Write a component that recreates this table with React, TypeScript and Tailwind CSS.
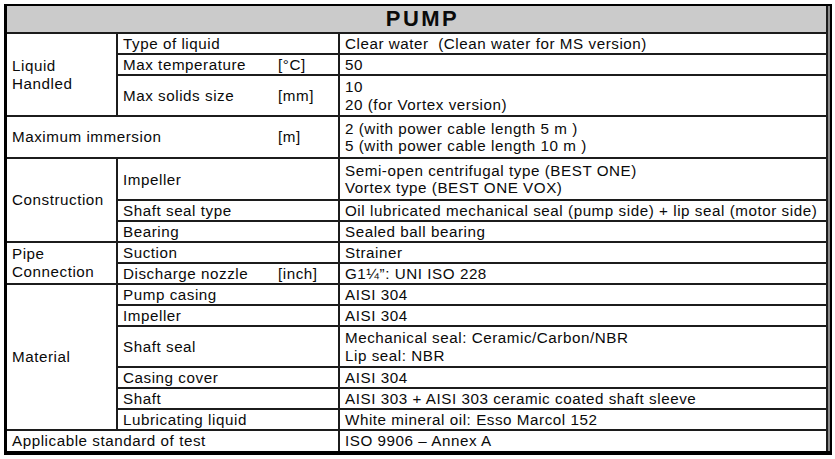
import React from "react";

const font = { fontFamily: '"Liberation Sans", Arial, sans-serif' };

function A({ r, span = 1, cols = 1, children }: { r: number; span?: number; cols?: number; children: React.ReactNode }) {
  return (
    <div
      className={`bg-white flex items-center pl-[5px] leading-[18px] col-start-1`}
      style={{ gridRow: `${r} / span ${span}`, gridColumn: `1 / span ${cols}` }}
    >
      <div>{children}</div>
    </div>
  );
}

function B({ r, label, unit }: { r: number; label: string; unit?: string }) {
  return (
    <div className="bg-white flex items-center pl-[5px] leading-[17px]" style={{ gridRow: `${r}`, gridColumn: "2" }}>
      <span className="w-[155px] shrink-0 whitespace-nowrap">{label}</span>
      {unit && <span className="whitespace-nowrap">{unit}</span>}
    </div>
  );
}

function C({ r, lines }: { r: number; lines: string[] }) {
  return (
    <div className="bg-white flex flex-col justify-center pl-[5px] leading-[17.5px]" style={{ gridRow: `${r}`, gridColumn: "3" }}>
      {lines.map((l, i) => (
        <div key={i} className="whitespace-pre">
          {l}
        </div>
      ))}
    </div>
  );
}

export default function App() {
  return (
    <div className="w-[835px] h-[459px] bg-white pt-[4px] pl-[4px]" style={font}>
      <div className="w-[828px] border-t-2 border-l-[3px] border-b-[4px] border-r-2 border-black bg-[#8a8a8a] pr-[2px]">
        <div className="grid grid-cols-[109px_220px_486px] grid-rows-[26px_19px_19px_39px_40px_40px_19px_19px_19px_19px_19px_19px_39px_19px_19px_19px_20px] gap-[2px] bg-[#1c1c1c] border-r-2 border-[#1c1c1c] text-[15.2px] tracking-[0.55px] text-[#0a0a0a]">
          <div className="bg-[#cbcbcb] flex items-center justify-center pl-[12px] font-bold text-[22px] tracking-[2.5px] leading-none" style={{ gridRow: "1", gridColumn: "1 / span 3" }}>
            PUMP
          </div>

          <A r={2} span={3}>
            Liquid
            <br />
            Handled
          </A>
          <B r={2} label="Type of liquid" />
          <C r={2} lines={["Clear water  (Clean water for MS version)"]} />
          <B r={3} label="Max temperature" unit="[°C]" />
          <C r={3} lines={["50"]} />
          <B r={4} label="Max solids size" unit="[mm]" />
          <C r={4} lines={["10", "20 (for Vortex version)"]} />

          <div className="bg-white flex items-center pl-[5px]" style={{ gridRow: "5", gridColumn: "1 / span 2" }}>
            <span className="w-[266px] shrink-0 whitespace-nowrap">Maximum immersion</span>
            <span>[m]</span>
          </div>
          <C r={5} lines={["2 (with power cable length 5 m )", "5 (with power cable length 10 m )"]} />

          <A r={6} span={3}>Construction</A>
          <B r={6} label="Impeller" />
          <C r={6} lines={["Semi-open centrifugal type (BEST ONE)", "Vortex type (BEST ONE VOX)"]} />
          <B r={7} label="Shaft seal type" />
          <C r={7} lines={["Oil lubricated mechanical seal (pump side) + lip seal (motor side)"]} />
          <B r={8} label="Bearing" />
          <C r={8} lines={["Sealed ball bearing"]} />

          <A r={9} span={2}>
            Pipe
            <br />
            Connection
          </A>
          <B r={9} label="Suction" />
          <C r={9} lines={["Strainer"]} />
          <B r={10} label="Discharge nozzle" unit="[inch]" />
          <C r={10} lines={["G1¼”: UNI ISO 228"]} />

          <A r={11} span={6}>Material</A>
          <B r={11} label="Pump casing" />
          <C r={11} lines={["AISI 304"]} />
          <B r={12} label="Impeller" />
          <C r={12} lines={["AISI 304"]} />
          <B r={13} label="Shaft seal" />
          <C r={13} lines={["Mechanical seal: Ceramic/Carbon/NBR", "Lip seal: NBR"]} />
          <B r={14} label="Casing cover" />
          <C r={14} lines={["AISI 304"]} />
          <B r={15} label="Shaft" />
          <C r={15} lines={["AISI 303 + AISI 303 ceramic coated shaft sleeve"]} />
          <B r={16} label="Lubricating liquid" />
          <C r={16} lines={["White mineral oil: Esso Marcol 152"]} />

          <A r={17} cols={2}>Applicable standard of test</A>
          <C r={17} lines={["ISO 9906 – Annex A"]} />
        </div>
      </div>
    </div>
  );
}
